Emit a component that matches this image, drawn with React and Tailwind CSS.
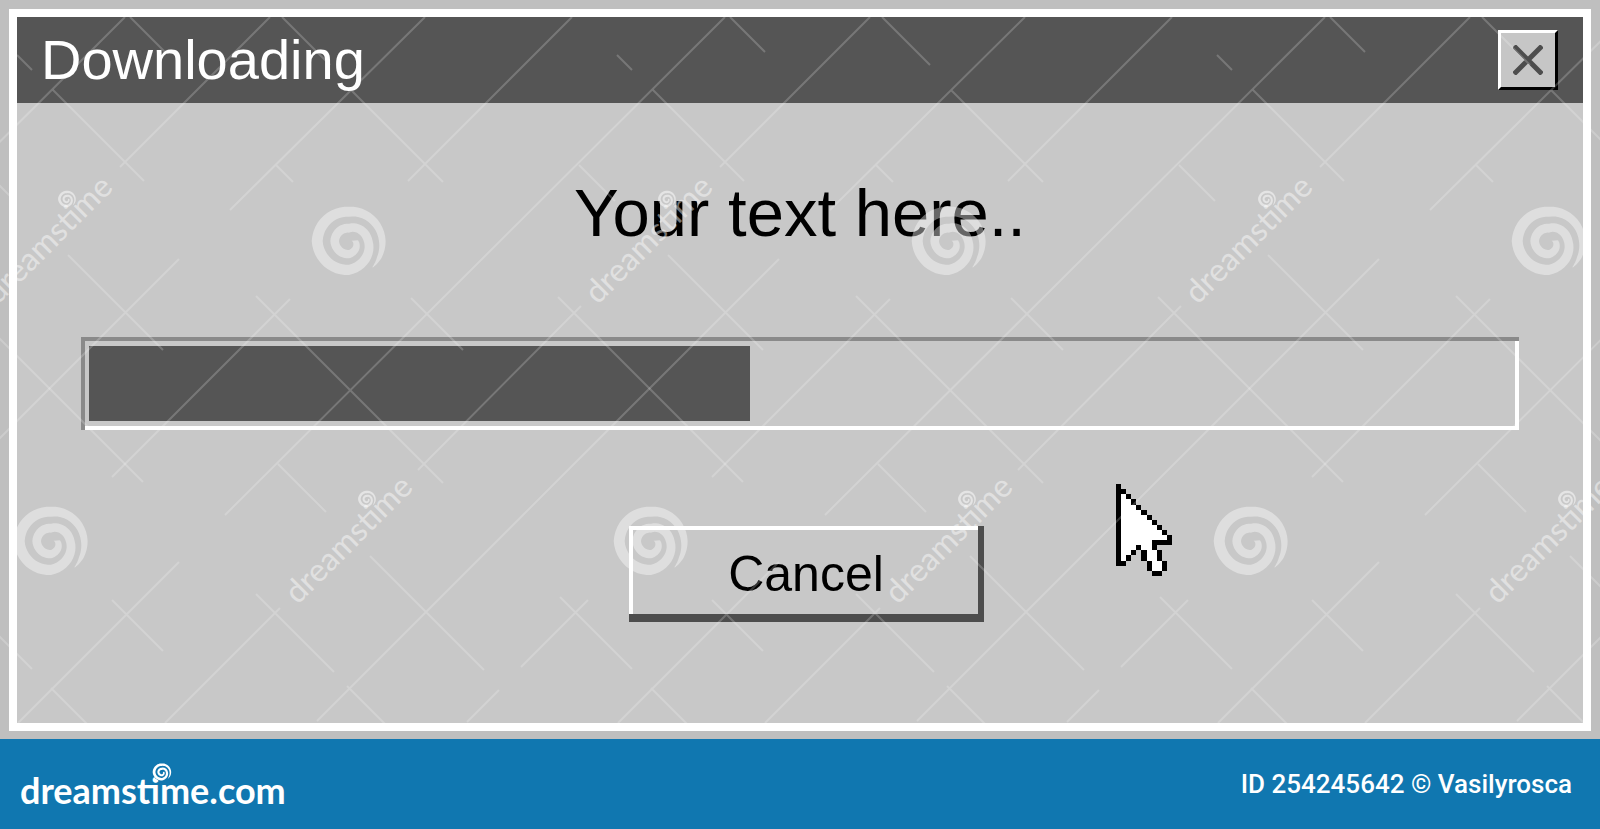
import { useState } from 'react'

// Spiral arm: [angle in degrees, outer radius, inner radius]
const SPIRAL_STOPS = [
  [-48, 107, 105],
  [-30, 110, 97],
  [0, 110, 90],
  [90, 103, 73],
  [180, 112, 79],
  [270, 102, 71],
  [360, 71, 44],
  [450, 52, 25],
  [540, 56, 30],
  [630, 52, 27],
  [680, 40, 17],
  [725, 27, 8],
]

function buildSpiral() {
  const outer = []
  const inner = []
  const point = (angle, radius) => {
    const a = (angle * Math.PI) / 180
    return `${(Math.cos(a) * radius).toFixed(1)} ${(-Math.sin(a) * radius).toFixed(1)}`
  }

  for (let i = 0; i < SPIRAL_STOPS.length - 1; i++) {
    const [a0, o0, i0] = SPIRAL_STOPS[i]
    const [a1, o1, i1] = SPIRAL_STOPS[i + 1]
    for (let s = 0; s <= 12; s++) {
      const t = s / 12
      const angle = a0 + (a1 - a0) * t
      outer.push(point(angle, o0 + (o1 - o0) * t))
      inner.unshift(point(angle, i0 + (i1 - i0) * t))
    }
  }
  return `M${[...outer, ...inner].join('L')}Z`
}

const SPIRAL = buildSpiral()

// Broken diagonals of the overlay, repeated every 600px
const LINES = [
  // rising
  'M270 17L120 167',
  'M425 17L230 210',
  'M572 17L408 181',
  'M725 17L225 515',
  'M179 259L18 420',
  'M290 299L112 477',
  'M581 306L418 470',
  'M618 420L317 721',
  'M179 562L18 723',
  'M280 608L165 723',
  'M588 600L521 667',
  'M499 690L467 722',
  // falling
  'M17 55L32 70',
  'M130 17L165 52',
  'M282 17L330 65',
  'M53 90L144 181',
  'M275 164L293 182',
  'M351 90L443 182',
  'M579 165L615 201',
  'M68 255L163 350',
  'M256 296L443 483',
  'M411 298L463 350',
  'M558 297L743 482',
  'M278 464L326 512',
  'M112 600L163 651',
  'M256 594L334 672',
  'M370 556L484 670',
  'M560 597L632 669',
  'M347 686L385 724',
  'M51 688L87 724',
].join('')

const CURSOR = [
  'X',
  'XX',
  'XWX',
  'XWWX',
  'XWWWX',
  'XWWWWX',
  'XWWWWWX',
  'XWWWWWWX',
  'XWWWWWWWX',
  'XWWWWWWWWX',
  'XWWWWWWWWWX',
  'XWWWWWWXXXX',
  'XWWWXWWX',
  'XWWX XWWX',
  'XWX  XWWX',
  'XX    XWWX',
  '      XWWX',
  '       XX',
]

function Stamp({ x, y }) {
  return (
    <g transform={`translate(${x} ${y})`}>
      <text
        transform="rotate(-45)"
        textAnchor="middle"
        y="10"
        className="font-['Lato'] text-[32px]"
        fill="white"
        opacity="0.45"
      >
        dreamstime
      </text>
      <path d={SPIRAL} transform="translate(18 -41) scale(0.08)" fill="white" opacity="0.5" />
    </g>
  )
}

function Watermark() {
  return (
    <svg className="absolute inset-0 w-full h-full pointer-events-none" aria-hidden="true">
      {[-600, 0, 600, 1200].map((x) => (
        <g key={x} transform={`translate(${x} 0)`}>
          <path d={LINES} stroke="white" strokeWidth="2" opacity="0.2" />
          <path d={SPIRAL} transform="translate(349 241) scale(0.333)" fill="white" opacity="0.4" />
          <path d={SPIRAL} transform="translate(651 541) scale(0.333)" fill="white" opacity="0.4" />
          <Stamp x={649} y={240} />
          <Stamp x={349} y={540} />
        </g>
      ))}
    </svg>
  )
}

function PixelCursor() {
  return (
    <svg
      viewBox="0 0 11 18"
      shapeRendering="crispEdges"
      className="absolute left-[1116px] top-[484px] w-[56px] h-[92px] pointer-events-none"
      aria-hidden="true"
    >
      {CURSOR.map((row, y) =>
        [...row].map((cell, x) =>
          cell === ' ' ? null : (
            <rect key={`${x}-${y}`} x={x} y={y} width="1" height="1" fill={cell === 'X' ? 'black' : 'white'} />
          ),
        ),
      )}
    </svg>
  )
}

function TitleBar({ title }) {
  return (
    <header className="flex items-center justify-between h-[86px] pl-6 pr-[25px] bg-[#555555]">
      <h1 className="font-['Liberation_Sans',sans-serif] text-[56px] leading-[80px] text-white">{title}</h1>
      <button
        type="button"
        aria-label="Close"
        className="flex items-center justify-center size-[60px] bg-[#c6c6c6] border-3 border-t-white border-l-white border-r-black border-b-black"
      >
        <svg viewBox="0 0 30 30" className="size-[30px]" aria-hidden="true">
          <path d="M1 1L29 29M29 1L1 29" stroke="#4d4d4d" strokeWidth="5" />
        </svg>
      </button>
    </header>
  )
}

function ProgressBar({ value }) {
  return (
    <div
      role="progressbar"
      aria-label="Download progress"
      aria-valuenow={value}
      aria-valuemin={0}
      aria-valuemax={100}
      className="mt-[84px] h-[93px] px-2 py-[9px] shadow-[inset_4px_0_#8a8a8a,inset_0_4px_#8a8a8a,inset_-4px_-4px_white]"
    >
      <div className="h-full bg-[#555555]" style={{ width: `${value}%` }} />
    </div>
  )
}

export default function App() {
  const [progress] = useState(46.5)

  return (
    <div className="min-h-screen flex flex-col bg-[#bfbfbf]">
      <div className="relative flex-1 flex flex-col p-[9px] pb-2 overflow-hidden">
        <main className="flex-1 border-8 border-white bg-[#c8c8c8]">
          <TitleBar title="Downloading" />
          <div className="px-16 pt-[70px] pb-[100px]">
            <p className="text-center font-['Liberation_Sans',sans-serif] text-[67px] leading-[80px] text-black">
              Your text here..
            </p>
            <ProgressBar value={progress} />
            <div className="flex justify-center mt-24 pl-3">
              <button
                type="button"
                className="w-[355px] h-24 bg-[#c8c8c8] shadow-[inset_0_-8px_#4d4d4d,inset_-6px_0_#4d4d4d,inset_4px_4px_white] font-['Liberation_Sans',sans-serif] text-[50px] leading-none text-black"
              >
                Cancel
              </button>
            </div>
          </div>
        </main>
        <PixelCursor />
        <Watermark />
      </div>

      <footer className="flex items-center justify-between h-[90px] px-5 bg-[#1077b0] text-white">
        <a href="#" className="relative pt-3 font-['Lato',sans-serif] font-bold text-[36px] leading-[48px]">
          dreamstime.com
          <svg viewBox="-120 -120 240 240" className="absolute left-[132px] top-2 size-5" aria-hidden="true">
            <circle r="110" fill="#1077b0" />
            <path d={SPIRAL} fill="white" />
          </svg>
        </a>
        <p className="pr-2 font-['Roboto',sans-serif] font-medium text-[26px]">ID 254245642 © Vasilyrosca</p>
      </footer>
    </div>
  )
}
